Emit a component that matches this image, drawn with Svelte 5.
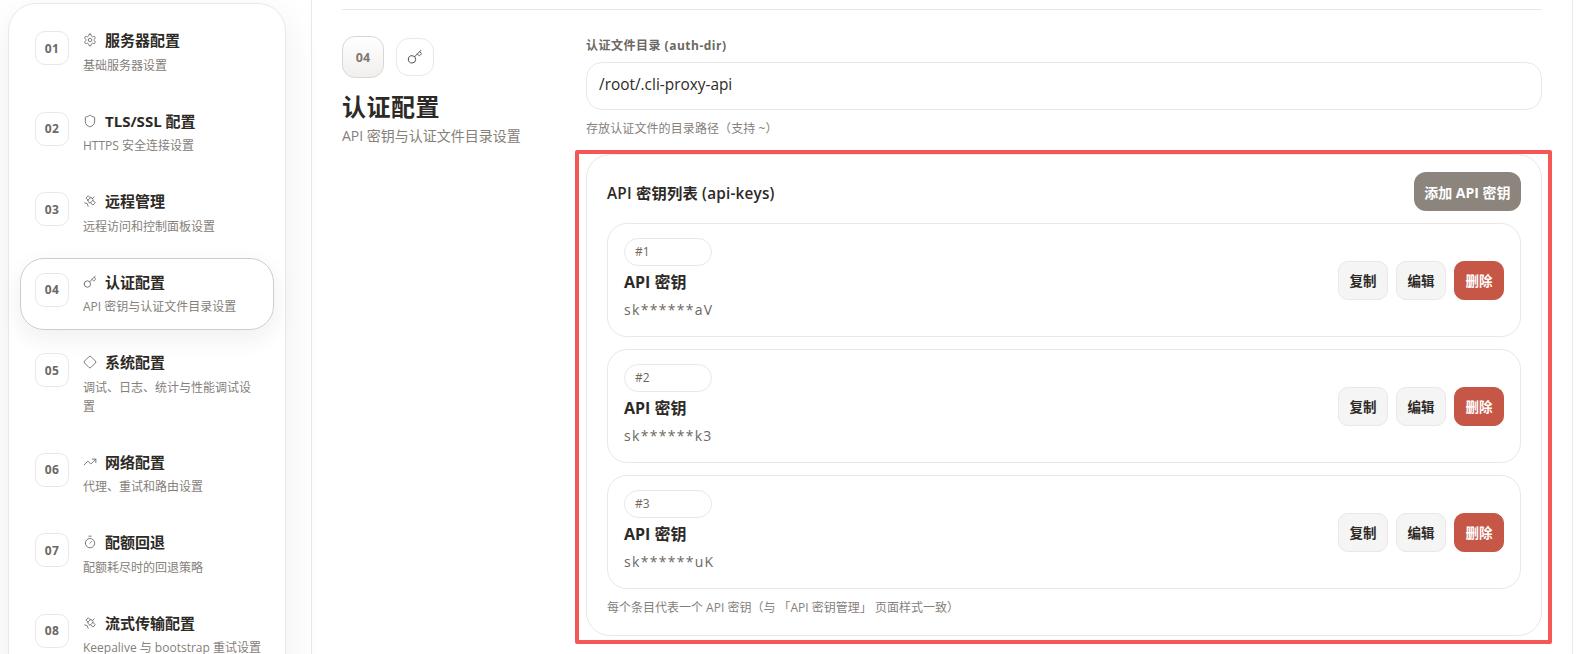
<script>
  const icons = {
    gear: [
      "M12.22 2h-.44a2 2 0 0 0-2 2v.18a2 2 0 0 1-1 1.73l-.43.25a2 2 0 0 1-2 0l-.15-.08a2 2 0 0 0-2.73.73l-.22.38a2 2 0 0 0 .73 2.73l.15.1a2 2 0 0 1 1 1.72v.51a2 2 0 0 1-1 1.74l-.15.09a2 2 0 0 0-.73 2.73l.22.38a2 2 0 0 0 2.73.73l.15-.08a2 2 0 0 1 2 0l.43.25a2 2 0 0 1 1 1.73V20a2 2 0 0 0 2 2h.44a2 2 0 0 0 2-2v-.18a2 2 0 0 1 1-1.73l.43-.25a2 2 0 0 1 2 0l.15.08a2 2 0 0 0 2.73-.73l.22-.39a2 2 0 0 0-.73-2.73l-.15-.08a2 2 0 0 1-1-1.74v-.5a2 2 0 0 1 1-1.74l.15-.09a2 2 0 0 0 .73-2.73l-.22-.38a2 2 0 0 0-2.73-.73l-.15.08a2 2 0 0 1-2 0l-.43-.25a2 2 0 0 1-1-1.73V4a2 2 0 0 0-2-2z",
      "M9 12a3 3 0 1 0 6 0a3 3 0 1 0-6 0"
    ],
    shield: [
      "M20 13c0 5-3.5 7.5-7.66 8.95a1 1 0 0 1-.67-.01C7.5 20.5 4 18 4 13V6a1 1 0 0 1 1-1c2 0 4.5-1.2 6.24-2.72a1.17 1.17 0 0 1 1.52 0C14.51 3.81 17 5 19 5a1 1 0 0 1 1 1z"
    ],
    satellite: [
      "M13 7 9 3 5 7l4 4",
      "m17 11 4 4-4 4-4-4",
      "m8 12 4 4 6-6-4-4Z",
      "m16 8 3-3",
      "M9 21a6 6 0 0 0-6-6"
    ],
    key: [
      "m15.5 7.5 2.3 2.3a1 1 0 0 0 1.4 0l2.1-2.1a1 1 0 0 0 0-1.4L19 4",
      "m21 2-9.6 9.6",
      "M2 15.5a5.5 5.5 0 1 0 11 0a5.5 5.5 0 1 0-11 0"
    ],
    diamond: [
      "M2.7 10.3a2.41 2.41 0 0 0 0 3.41l7.59 7.59a2.41 2.41 0 0 0 3.41 0l7.59-7.59a2.41 2.41 0 0 0 0-3.41l-7.59-7.59a2.41 2.41 0 0 0-3.41 0Z"
    ],
    trend: ["M22 7 13.5 15.5 8.5 10.5 2 17", "M16 7h6v6"],
    timer: ["M10 2h4", "M12 14l3-3", "M4 14a8 8 0 1 0 16 0a8 8 0 1 0-16 0"]
  };

  const navItems = [
    { no: "01", icon: "gear", title: "服务器配置", desc: "基础服务器设置" },
    { no: "02", icon: "shield", title: "TLS/SSL 配置", desc: "HTTPS 安全连接设置" },
    { no: "03", icon: "satellite", title: "远程管理", desc: "远程访问和控制面板设置" },
    { no: "04", icon: "key", title: "认证配置", desc: "API 密钥与认证文件目录设置", active: true },
    { no: "05", icon: "diamond", title: "系统配置", desc: "调试、日志、统计与性能调试设置" },
    { no: "06", icon: "trend", title: "网络配置", desc: "代理、重试和路由设置" },
    { no: "07", icon: "timer", title: "配额回退", desc: "配额耗尽时的回退策略" },
    { no: "08", icon: "satellite", title: "流式传输配置", desc: "Keepalive 与 bootstrap 重试设置" }
  ];

  const apiKeys = ["sk******aV", "sk******k3", "sk******uK"];
</script>

{#snippet icon(name, size)}
  <svg class="icon" width={size} height={size} viewBox="0 0 24 24" fill="none" stroke="currentColor" stroke-width="1.5" stroke-linecap="round" stroke-linejoin="round">
    {#each icons[name] as d}
      <path {d} />
    {/each}
  </svg>
{/snippet}

<div class="page">
  <aside class="sidebar">
    <nav class="nav">
      {#each navItems as item}
        <a class="nav-item" class:active={item.active} href="#{item.no}">
          <span class="nav-no">{item.no}</span>
          <span class="nav-text">
            <span class="nav-title">{@render icon(item.icon, 14)}{item.title}</span>
            <span class="nav-desc">{item.desc}</span>
          </span>
        </a>
      {/each}
    </nav>
  </aside>

  <main class="main">
    <section class="section">
      <div class="section-head">
        <div class="badges">
          <span class="section-no">04</span>
          <span class="section-icon">{@render icon("key", 16)}</span>
        </div>
        <h2>认证配置</h2>
        <p>API 密钥与认证文件目录设置</p>
      </div>

      <div class="section-body">
        <label class="label" for="auth-dir">认证文件目录 (auth-dir)</label>
        <input id="auth-dir" class="input" value="/root/.cli-proxy-api" />
        <p class="hint">存放认证文件的目录路径（支持 ~）</p>

        <div class="highlight">
          <div class="card">
            <div class="card-head">
              <h3>API 密钥列表 (api-keys)</h3>
              <button class="add">添加 API 密钥</button>
            </div>
            <div class="key-list">
              {#each apiKeys as key, i}
                <div class="key-row">
                  <div class="key-info">
                    <span class="pill">#{i + 1}</span>
                    <strong>API 密钥</strong>
                    <span class="mask">{key}</span>
                  </div>
                  <div class="actions">
                    <button class="btn">复制</button>
                    <button class="btn">编辑</button>
                    <button class="btn danger">删除</button>
                  </div>
                </div>
              {/each}
            </div>
            <p class="foot">每个条目代表一个 API 密钥（与 「API 密钥管理」 页面样式一致）</p>
          </div>
          <div class="ring"></div>
        </div>
      </div>
    </section>
  </main>
</div>

<style>
  :global(body) {
    background: #fff;
    color: #2d2a26;
    font-family: "Open Sans", "Noto Sans CJK SC", sans-serif;
  }

  .page {
    display: flex;
    height: 654px;
    overflow: hidden;
  }

  .sidebar {
    box-sizing: border-box;
    flex: none;
    width: 311px;
    padding: 3px 25px 0 8px;
  }
  .nav {
    box-sizing: border-box;
    display: flex;
    flex-direction: column;
    gap: 8.5px;
    padding: 12px 11px;
    background: #fff;
    border: 1px solid #e9e8e6;
    border-radius: 28px;
    box-shadow: 0 12px 40px rgba(30, 25, 20, 0.07);
  }
  .nav-item {
    display: flex;
    gap: 14px;
    min-height: 72px;
    box-sizing: border-box;
    padding: 14px 11px 0 14px;
    border: 1px solid transparent;
    border-radius: 24px;
    color: inherit;
    text-decoration: none;
  }
  .nav-item.active {
    border-color: #cfcdca;
    box-shadow: 0 8px 24px rgba(30, 25, 20, 0.07);
  }
  .nav-no {
    flex: none;
    width: 32px;
    height: 32px;
    display: flex;
    align-items: center;
    justify-content: center;
    border: 1px solid #e9e8e6;
    border-radius: 10px;
    font-size: 12px;
    font-weight: 700;
    color: #6d6862;
    letter-spacing: 0.5px;
  }
  .nav-text {
    display: flex;
    flex-direction: column;
    gap: 3.5px;
    min-width: 0;
  }
  .nav-title {
    display: flex;
    align-items: center;
    gap: 8px;
    margin-top: -3px;
    font-size: 15px;
    line-height: 24px;
    font-weight: 700;
  }
  .nav-title .icon {
    color: #6d6862;
    flex: none;
  }
  .nav-desc {
    font-size: 12px;
    line-height: 19px;
    color: #85807a;
    margin-bottom: 12.5px;
  }

  .main {
    box-sizing: border-box;
    flex: none;
    width: 1262px;
    padding: 9px 30px 0;
    border-left: 1px solid #e9e8e6;
    border-right: 1px solid #e9e8e6;
  }
  .section {
    display: grid;
    grid-template-columns: 244px 1fr;
    padding-top: 26px;
    border-top: 1px solid #e9e8e6;
  }
  .badges {
    display: flex;
    align-items: center;
    gap: 12px;
  }
  .section-no {
    box-sizing: border-box;
    width: 42px;
    height: 42px;
    display: flex;
    align-items: center;
    justify-content: center;
    border: 1px solid #d9d7d4;
    border-radius: 13px;
    background: linear-gradient(180deg, #fff, #f0efed);
    font-size: 12.5px;
    font-weight: 700;
    color: #7d7871;
  }
  .section-icon {
    box-sizing: border-box;
    width: 38px;
    height: 38px;
    display: flex;
    align-items: center;
    justify-content: center;
    border: 1px solid #e9e8e6;
    border-radius: 13px;
    color: #57534e;
  }
  h2 {
    margin: 11px 0 0;
    font-size: 24px;
    line-height: 36px;
    font-weight: 700;
    letter-spacing: 0.5px;
  }
  .section-head p {
    margin: 0;
    font-size: 14px;
    line-height: 22px;
    color: #85807a;
  }

  .section-body {
    min-width: 0;
    padding-top: 1px;
  }
  .label {
    display: block;
    font-size: 12px;
    line-height: 18px;
    font-weight: 700;
    letter-spacing: 0.5px;
    color: #6d6862;
    margin-bottom: 7px;
  }
  .input {
    display: block;
    box-sizing: border-box;
    width: 100%;
    height: 48px;
    padding: 0 12px 3px;
    border: 1px solid #e9e8e6;
    border-radius: 16px;
    background: #fff;
    color: #2d2a26;
    font-family: inherit;
    font-size: 15.4px;
  }
  .hint {
    margin: 10px 0 16px;
    font-size: 12px;
    line-height: 18px;
    letter-spacing: 0.1px;
    color: #85807a;
  }

  .highlight {
    position: relative;
  }
  .ring {
    position: absolute;
    inset: -4px -10px -8px -11px;
    border: 4px solid #f55656;
    border-radius: 2px;
    pointer-events: none;
  }
  .card {
    padding: 15px 20px 18px;
    border: 1px solid #e9e8e6;
    border-radius: 24px;
    background: #fff;
  }
  .card-head {
    display: flex;
    align-items: center;
    justify-content: space-between;
    margin-top: 2px;
    margin-bottom: 12px;
  }
  h3 {
    margin: 0;
    font-size: 15.3px;
    font-weight: 600;
    letter-spacing: 0.2px;
  }
  button {
    font-family: inherit;
    font-weight: 700;
    font-size: 13.5px;
    cursor: pointer;
  }
  .add {
    height: 39px;
    padding: 0 10.5px;
    border: none;
    border-radius: 12px;
    background: #8b857e;
    color: #fff;
    font-size: 14px;
  }
  .key-list {
    display: flex;
    flex-direction: column;
    gap: 12px;
  }
  .key-row {
    box-sizing: border-box;
    height: 114px;
    display: flex;
    align-items: center;
    justify-content: space-between;
    padding: 0 16px;
    border: 1px solid #e9e8e6;
    border-radius: 20px;
  }
  .key-info {
    display: flex;
    flex-direction: column;
    align-items: flex-start;
    padding-bottom: 2px;
  }
  .pill {
    box-sizing: border-box;
    width: 88px;
    height: 28px;
    padding-left: 10px;
    line-height: 26px;
    border: 1px solid #e9e8e6;
    border-radius: 14px;
    font-size: 12px;
    color: #6d6862;
  }
  .key-info strong {
    margin-top: 4px;
    font-size: 16px;
    line-height: 24px;
  }
  .mask {
    margin-top: 5px;
    font-size: 14px;
    line-height: 22px;
    letter-spacing: 1.3px;
    color: #6d6862;
  }
  .actions {
    display: flex;
    gap: 8px;
  }
  .btn {
    width: 50px;
    height: 39px;
    padding: 0;
    border: 1px solid #e9e8e6;
    border-radius: 10px;
    background: #f5f5f5;
    color: #2d2a26;
  }
  .btn.danger {
    border-color: #c65746;
    background: #c65746;
    color: #fff;
  }
  .foot {
    margin: 10px 0 0;
    font-size: 12px;
    line-height: 18px;
    color: #85807a;
  }
</style>
